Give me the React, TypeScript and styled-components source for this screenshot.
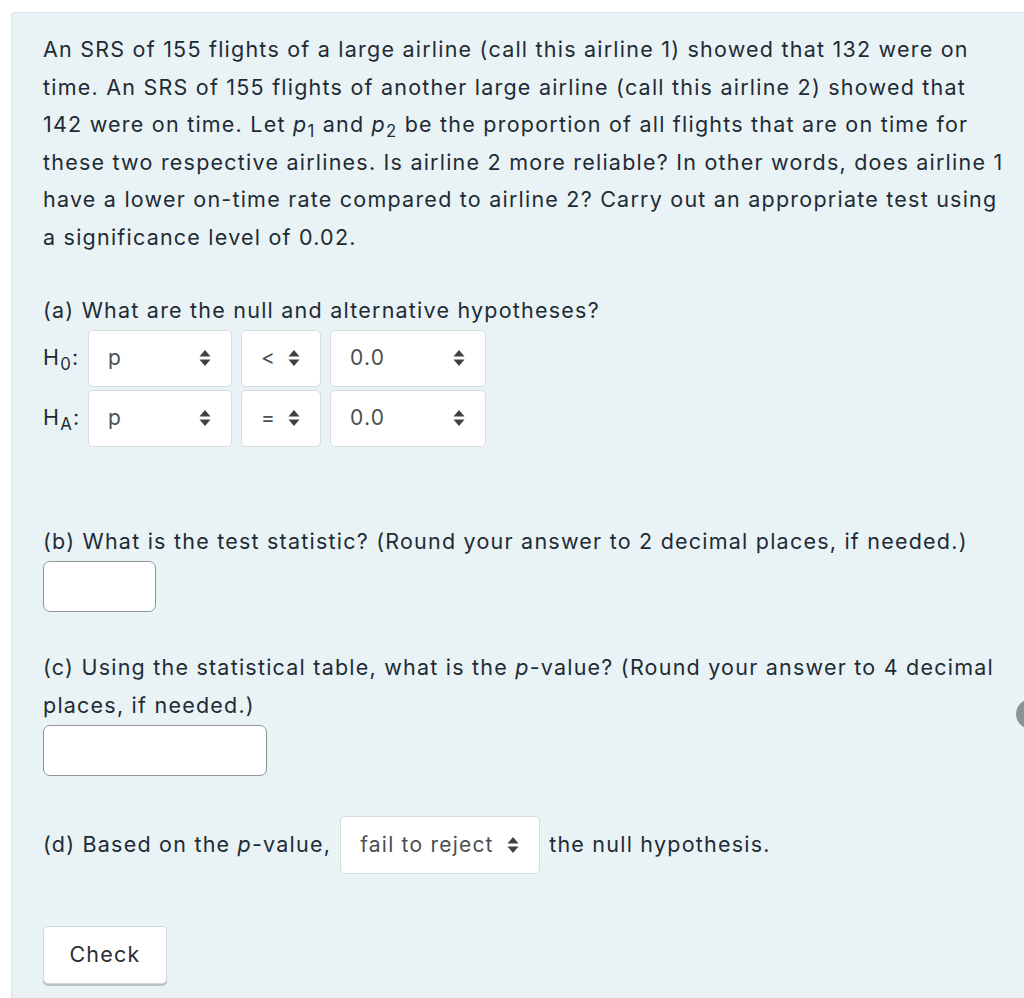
import React from "react";
import styled, { createGlobalStyle } from "styled-components";

const Global = createGlobalStyle`
  html, body { margin: 0; padding: 0; background: #ffffff; }
  body { font-family: Inter, "Noto Sans", sans-serif; overflow: hidden; }
`;

const Page = styled.div`
  position: relative;
  width: 1024px;
  height: 998px;
  overflow: hidden;
  padding-top: 12px;
  padding-left: 11px;
  box-sizing: border-box;
`;

const Panel = styled.div`
  background: #e9f3f6;
  border: 1px solid #d3e4ea;
  border-right: none;
  border-radius: 4px 0 0 0;
  padding: 18px 20px 40px 31px;
  min-height: 1100px;
  color: #1e2b35;
  font-size: 21.5px;
  line-height: 37.5px;
  letter-spacing: 1.22px;
`;

const Para = styled.p`
  margin: 0;
  width: 970px;
  white-space: nowrap;
`;

const Question = styled.p<{ $top: number }>`
  margin: ${(p) => p.$top}px 0 0 0;
  width: 970px;
  white-space: nowrap;
`;

const Var = styled.span`
  font-style: italic;
`;

const Sub = styled.sub`
  font-size: 0.78em;
  vertical-align: -0.28em;
  line-height: 0;
  font-style: normal;
`;

const HypRow = styled.div<{ $top: number }>`
  display: flex;
  align-items: center;
  gap: 9px;
  margin-top: ${(p) => p.$top}px;
`;

const HLabel = styled.span`
  width: 36px;
  white-space: nowrap;
`;

const Select = styled.div<{ $w: number; $h?: number }>`
  box-sizing: border-box;
  width: ${(p) => p.$w}px;
  height: ${(p) => p.$h ?? 57}px;
  background: #ffffff;
  border: 1.5px solid #d6dcdf;
  border-radius: 5px;
  display: flex;
  align-items: center;
  justify-content: space-between;
  padding: 0 20px 0 19px;
  color: #4b4f52;
  font-size: 21px;
  white-space: nowrap;
`;

const Arrows = () => (
  <svg width="12" height="18" viewBox="0 0 12 18" aria-hidden>
    <path d="M6 1 L11.5 7.5 H0.5 Z" fill="#3d4245" />
    <path d="M6 17 L11.5 10.5 H0.5 Z" fill="#3d4245" />
  </svg>
);

const TextInput = styled.div<{ $w: number }>`
  box-sizing: border-box;
  width: ${(p) => p.$w}px;
  height: 51px;
  margin-top: 1px;
  background: #ffffff;
  border: 1.5px solid #8e9497;
  border-radius: 7px;
`;

const InlineRow = styled.div`
  display: flex;
  align-items: center;
  gap: 9px;
  margin-top: 40px;
  white-space: nowrap;
`;

const Button = styled.div`
  box-sizing: border-box;
  margin-top: 52px;
  width: 124px;
  height: 58px;
  background: #ffffff;
  border: 1px solid #d2d7d9;
  border-radius: 5px;
  box-shadow: 0 2px 0 #b9bfc2;
  display: flex;
  align-items: center;
  justify-content: center;
  font-size: 21.5px;
  color: #2a2f33;
`;

const Knob = styled.div`
  position: absolute;
  left: 1016px;
  top: 699px;
  width: 30px;
  height: 30px;
  border-radius: 50%;
  background: #8c9194;
`;

export default function App() {
  return (
    <Page>
      <Global />
      <Panel>
        <Para>
          An SRS of 155 flights of a large airline (call this airline 1) showed that 132 were on
          <br />
          time. An SRS of 155 flights of another large airline (call this airline 2) showed that
          <br />
          142 were on time. Let <Var>p</Var>
          <Sub>1</Sub> and <Var>p</Var>
          <Sub>2</Sub> be the proportion of all flights that are on time for
          <br />
          these two respective airlines. Is airline 2 more reliable? In other words, does airline 1
          <br />
          have a lower on-time rate compared to airline 2? Carry out an appropriate test using
          <br />
          a significance level of 0.02.
        </Para>
        <Question $top={36}>(a) What are the null and alternative hypotheses?</Question>
        <HypRow $top={0}>
          <HLabel>
            H<Sub>0</Sub>:
          </HLabel>
          <Select $w={144}>
            <span>p</span>
            <Arrows />
          </Select>
          <Select $w={80}>
            <span>&lt;</span>
            <Arrows />
          </Select>
          <Select $w={156}>
            <span>0.0</span>
            <Arrows />
          </Select>
        </HypRow>
        <HypRow $top={3}>
          <HLabel>
            H<Sub>A</Sub>:
          </HLabel>
          <Select $w={144}>
            <span>p</span>
            <Arrows />
          </Select>
          <Select $w={80}>
            <span>=</span>
            <Arrows />
          </Select>
          <Select $w={156}>
            <span>0.0</span>
            <Arrows />
          </Select>
        </HypRow>
        <Question $top={76}>
          (b) What is the test statistic? (Round your answer to 2 decimal places, if needed.)
        </Question>
        <TextInput $w={113} />
        <Question $top={37}>
          (c) Using the statistical table, what is the <Var>p</Var>-value? (Round your answer to 4
          decimal
          <br />
          places, if needed.)
        </Question>
        <TextInput $w={224} />
        <InlineRow>
          <span>
            (d) Based on the <Var>p</Var>-value,
          </span>
          <Select $w={200} $h={58}>
            <span>fail to reject</span>
            <Arrows />
          </Select>
          <span>the null hypothesis.</span>
        </InlineRow>
        <Button>Check</Button>
      </Panel>
      <Knob />
    </Page>
  );
}
